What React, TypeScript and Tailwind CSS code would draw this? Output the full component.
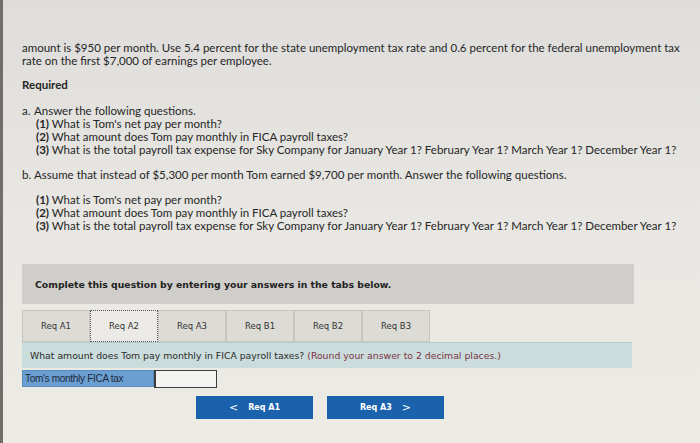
import React from 'react';

const tabs = ['Req A1', 'Req A2', 'Req A3', 'Req B1', 'Req B2', 'Req B3'];

export default function App() {
  return (
    <div className="w-[700px] h-[443px] overflow-hidden flex bg-gradient-to-b from-[#dedddb] via-[#e8e7e3] to-[#edebe4]">
      <div className="w-[3px] bg-[#6f6e6a]" />
      <div className="flex-1 pl-[19px] pt-[41px] text-[#262626] font-['Lato',sans-serif] text-[11.5px] leading-[13px]">
        <p className="pr-[12px]">
          amount is $950 per month. Use 5.4 percent for the state unemployment tax rate and 0.6 percent for the federal unemployment tax rate on the first $7,000 of earnings per employee.
        </p>
        <p className="font-bold mt-[11px]">Required</p>

        <div className="mt-[13px] flex">
          <span className="w-[12px]">a.</span>
          <div>
            <p>Answer the following questions.</p>
            <div className="ml-[2px]">
              <p><b>(1)</b> What is Tom's net pay per month?</p>
              <p><b>(2)</b> What amount does Tom pay monthly in FICA payroll taxes?</p>
              <p><b>(3)</b> What is the total payroll tax expense for Sky Company for January Year 1? February Year 1? March Year 1? December Year 1?</p>
            </div>
          </div>
        </div>

        <div className="mt-[12px] flex">
          <span className="w-[12px]">b.</span>
          <div>
            <p>Assume that instead of $5,300 per month Tom earned $9,700 per month. Answer the following questions.</p>
            <div className="ml-[2px] mt-[12px]">
              <p><b>(1)</b> What is Tom's net pay per month?</p>
              <p><b>(2)</b> What amount does Tom pay monthly in FICA payroll taxes?</p>
              <p><b>(3)</b> What is the total payroll tax expense for Sky Company for January Year 1? February Year 1? March Year 1? December Year 1?</p>
            </div>
          </div>
        </div>

        <div className="mt-[32px] w-[612px] h-[40px] bg-[#cfceca] flex items-center pl-[13px] font-['DejaVu_Sans',sans-serif] font-bold text-[9.3px] text-[#222]">
          Complete this question by entering your answers in the tabs below.
        </div>

        <div className="mt-[6px] flex h-[32px] font-['DejaVu_Sans',sans-serif] text-[8.5px] text-[#333]">
          {tabs.map((t, i) => (
            <div
              key={t}
              className={
                i === 1
                  ? 'w-[68px] flex items-center justify-center bg-[#ebeae6] border border-dotted border-[#555]'
                  : 'w-[68px] flex items-center justify-center bg-[#dcdbd6] border border-[#c6c5c0]'
              }
            >
              {t}
            </div>
          ))}
        </div>

        <div className="w-[610px] h-[26px] bg-[#cbdcdc] border-t border-[#b9cccd] flex items-center pl-[8px] font-['DejaVu_Sans',sans-serif] text-[9.3px] text-[#2a2a2a]">
          What amount does Tom pay monthly in FICA payroll taxes?&nbsp;<span className="text-[#7b3344]">(Round your answer to 2 decimal places.)</span>
        </div>

        <div className="mt-[2px] flex h-[17px]">
          <div className="w-[132px] bg-[#6b9fd2] border border-[#5b8cc0] flex items-center pl-[2px] font-['Liberation_Sans',sans-serif] text-[10px] text-[#1e2a3a] tracking-[-0.3px]">
            Tom's monthly FICA tax
          </div>
          <div className="w-[63px] h-[18px] bg-[#f4f4f2] border border-[#3d3d3d] border-l-[2px]" />
        </div>

        <div className="mt-[9px] flex gap-[14px] pl-[174px] font-['DejaVu_Sans',sans-serif] font-bold text-[8px] text-white">
          <div className="w-[117px] h-[23px] bg-[#1b62ad] flex items-center justify-center gap-[10px]">
            <span className="text-[11px] font-normal">&lt;</span>
            <span>Req A1</span>
          </div>
          <div className="w-[117px] h-[23px] bg-[#1b62ad] flex items-center justify-center gap-[10px]">
            <span>Req A3</span>
            <span className="text-[11px] font-normal">&gt;</span>
          </div>
        </div>
      </div>
    </div>
  );
}
